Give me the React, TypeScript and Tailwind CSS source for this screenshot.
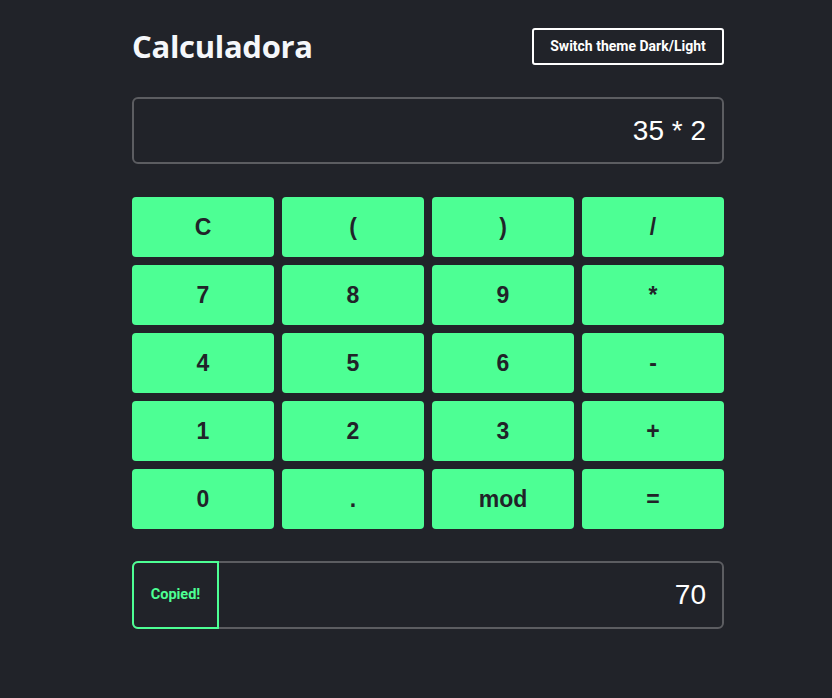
import React, { useState } from 'react';

const keys = ['C', '(', ')', '/', '7', '8', '9', '*', '4', '5', '6', '-', '1', '2', '3', '+', '0', '.', 'mod', '='];

export default function App() {
    const [expr] = useState('35 * 2');
    const [result] = useState('70');

    return (
        <div className="min-h-[698px] w-full bg-[#212329] font-['Liberation_Sans',Arial,sans-serif]">
            <div className="ml-[132px] w-[592px] pt-[28px]">
                <header className="flex items-center justify-between h-[37px]">
                    <h1 className="text-[31px] font-bold text-[#f5f7fa] font-['Open_Sans','Noto_Sans',sans-serif] tracking-[-0.3px] leading-none">
                        Calculadora
                    </h1>
                    <button className="h-[37px] w-[192px] rounded-[3px] border-2 border-white text-[14px] font-bold text-white font-['Roboto',sans-serif]">
                        Switch theme Dark/Light
                    </button>
                </header>

                <div className="mt-[32px] flex h-[67px] items-center justify-end rounded-[6px] border-2 border-[#5c5d61] px-[16px]">
                    <span className="text-[28px] text-white">{expr}</span>
                </div>

                <div className="mt-[33px] grid grid-cols-4 gap-[8px]">
                    {keys.map((k) => (
                        <button
                            key={k}
                            className="h-[60px] rounded-[4px] bg-[#4dff94] text-[23px] font-bold text-[#212329]"
                        >
                            {k}
                        </button>
                    ))}
                </div>

                <div className="mt-[32px] flex h-[68px] items-stretch rounded-[6px] border-2 border-[#5c5d61]">
                    <div className="-m-[2px] flex w-[87px] items-center justify-center rounded-l-[6px] border-2 border-[#4dff94] text-[14.5px] font-bold text-[#4dff94] font-['Roboto',sans-serif]">
                        Copied!
                    </div>
                    <div className="flex flex-1 items-center justify-end px-[16px]">
                        <span className="text-[28px] text-white">{result}</span>
                    </div>
                </div>
            </div>
        </div>
    );
}
